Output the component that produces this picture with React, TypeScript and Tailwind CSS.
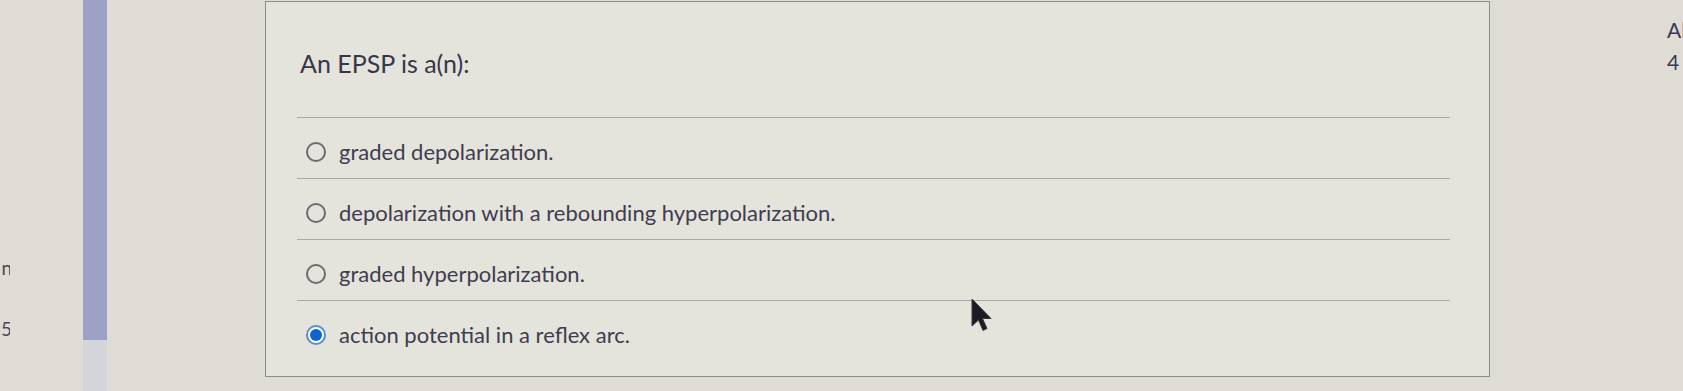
import React from 'react';

const options = [
  { id: 'a', label: 'graded depolarization.' },
  { id: 'b', label: 'depolarization with a rebounding hyperpolarization.' },
  { id: 'c', label: 'graded hyperpolarization.' },
  { id: 'd', label: 'action potential in a reflex arc.' },
];

const selected = 'd';

const Radio = ({ checked }: { checked: boolean }) =>
  checked ? (
    <span className="flex h-[20px] w-[20px] shrink-0 items-center justify-center rounded-full border-2 border-[#5a8bd4] bg-white">
      <span className="h-[12px] w-[12px] rounded-full bg-[#0b63d6]" />
    </span>
  ) : (
    <span className="h-[20px] w-[20px] shrink-0 rounded-full border-2 border-[#6c6b70]" />
  );

const Cursor = () => (
  <svg className="absolute left-[705px] top-[296px]" width="26" height="38" viewBox="0 0 26 38">
    <path d="M1 1 L1 28 L7.5 22 L12 32.5 L16 30.5 L11.5 20.5 L20 20.5 Z" fill="#1c1b22" stroke="#3a3940" strokeWidth="1" strokeLinejoin="round" />
  </svg>
);

export default function App() {
  return (
    <div
      className="flex h-[391px] w-[1683px] overflow-hidden bg-[#dedcd4] text-[#3c3a4a]"
      style={{ fontFamily: 'Lato, "Open Sans", sans-serif' }}
    >
      {/* cut-off nav column */}
      <div className="w-[83px] shrink-0">
        <div className="w-[10px] overflow-hidden">
          <div className="flex w-[10px] flex-col items-end pt-[256px] text-[19px] leading-[24px] text-[#4a4858]">
            <span className="mr-[-2px]">n</span>
            <span className="mr-[-2px] mt-[37px]">5</span>
          </div>
        </div>
      </div>

      {/* scrollbar-like strip */}
      <div className="flex w-[24px] shrink-0 flex-col">
        <div className="h-[340px] bg-[#9da1c5]" />
        <div className="flex-1 bg-[#d4d5db]" />
      </div>

      <div className="w-[158px] shrink-0" />

      {/* question card */}
      <div className="relative mt-[1px] h-[376px] w-[1225px] shrink-0 border border-[#8d8c90] bg-[#e4e3dc]">
        <div className="ml-[31px] w-[1153px]">
          <h2 className="pl-[3px] pt-[46px] text-[25px] leading-[30px] font-normal text-[#383649]">An EPSP is a(n):</h2>
          <div className="mt-[39px]">
            {options.map((o) => (
              <div key={o.id} className="flex h-[61px] items-center gap-[13px] border-t border-[#aaa9a6] pl-[9px] pt-[8px]">
                <Radio checked={o.id === selected} />
                <span className="text-[22px] leading-[26px] text-[#3f3d4e]">{o.label}</span>
              </div>
            ))}
          </div>
        </div>
        <Cursor />
      </div>

      <div className="w-[177px] shrink-0" />

      {/* cut-off right column */}
      <div className="flex flex-col pt-[14px] text-[21px] leading-[32px] text-[#3a3856]">
        <span className="whitespace-nowrap">Al</span>
        <span>4</span>
      </div>
    </div>
  );
}
